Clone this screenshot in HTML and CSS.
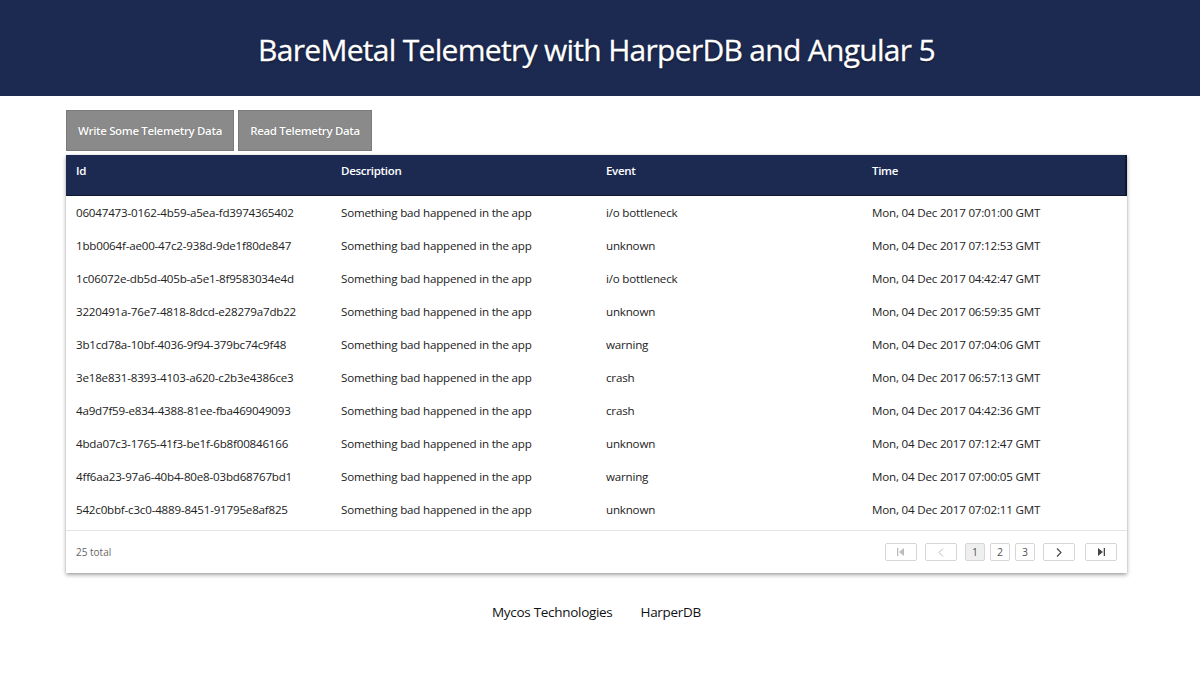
FILE: index.html
```html
<!DOCTYPE html>
<html>
<head>
<meta charset="utf-8">
<link rel="stylesheet" href="styles.css">
</head>
<body>
<header class="banner"><h1>BareMetal Telemetry with HarperDB and Angular 5</h1></header>
<main class="content">
  <div class="actions">
    <button class="btn">Write Some Telemetry Data</button>
    <button class="btn">Read Telemetry Data</button>
  </div>
  <section class="card">
    <div class="thead">
      <div>Id</div><div>Description</div><div>Event</div><div>Time</div>
    </div>
    <div class="tbody">
      <div class="row"><div>06047473-0162-4b59-a5ea-fd3974365402</div><div>Something bad happened in the app</div><div>i/o bottleneck</div><div>Mon, 04 Dec 2017 07:01:00 GMT</div></div>
      <div class="row"><div>1bb0064f-ae00-47c2-938d-9de1f80de847</div><div>Something bad happened in the app</div><div>unknown</div><div>Mon, 04 Dec 2017 07:12:53 GMT</div></div>
      <div class="row"><div>1c06072e-db5d-405b-a5e1-8f9583034e4d</div><div>Something bad happened in the app</div><div>i/o bottleneck</div><div>Mon, 04 Dec 2017 04:42:47 GMT</div></div>
      <div class="row"><div>3220491a-76e7-4818-8dcd-e28279a7db22</div><div>Something bad happened in the app</div><div>unknown</div><div>Mon, 04 Dec 2017 06:59:35 GMT</div></div>
      <div class="row"><div>3b1cd78a-10bf-4036-9f94-379bc74c9f48</div><div>Something bad happened in the app</div><div>warning</div><div>Mon, 04 Dec 2017 07:04:06 GMT</div></div>
      <div class="row"><div>3e18e831-8393-4103-a620-c2b3e4386ce3</div><div>Something bad happened in the app</div><div>crash</div><div>Mon, 04 Dec 2017 06:57:13 GMT</div></div>
      <div class="row"><div>4a9d7f59-e834-4388-81ee-fba469049093</div><div>Something bad happened in the app</div><div>crash</div><div>Mon, 04 Dec 2017 04:42:36 GMT</div></div>
      <div class="row"><div>4bda07c3-1765-41f3-be1f-6b8f00846166</div><div>Something bad happened in the app</div><div>unknown</div><div>Mon, 04 Dec 2017 07:12:47 GMT</div></div>
      <div class="row"><div>4ff6aa23-97a6-40b4-80e8-03bd68767bd1</div><div>Something bad happened in the app</div><div>warning</div><div>Mon, 04 Dec 2017 07:00:05 GMT</div></div>
      <div class="row"><div>542c0bbf-c3c0-4889-8451-91795e8af825</div><div>Something bad happened in the app</div><div>unknown</div><div>Mon, 04 Dec 2017 07:02:11 GMT</div></div>
    </div>
    <div class="tfoot">
      <span class="total">25 total</span>
      <nav class="pager">
        <span class="pg wide"><svg width="10" height="8" viewBox="0 0 10 8"><rect x="1" y="0" width="1.3" height="8" fill="#bbb"/><path d="M8 0 L3 4 L8 8 Z" fill="#bbb"/></svg></span>
        <span class="pg wide"><svg width="6" height="9" viewBox="0 0 6 9"><path d="M5 0.5 L1 4.5 L5 8.5" fill="none" stroke="#bbb" stroke-width="1"/></svg></span>
        <span class="pg num active">1</span>
        <span class="pg num">2</span>
        <span class="pg num">3</span>
        <span class="pg wide"><svg width="6" height="9" viewBox="0 0 6 9"><path d="M1 0.5 L5 4.5 L1 8.5" fill="none" stroke="#444" stroke-width="1.1"/></svg></span>
        <span class="pg wide"><svg width="10" height="8" viewBox="0 0 10 8"><path d="M2 0 L7 4 L2 8 Z" fill="#444"/><rect x="7.7" y="0" width="1.3" height="8" fill="#444"/></svg></span>
      </nav>
    </div>
  </section>
</main>
<footer class="links">
  <a href="#">Mycos Technologies</a>
  <a href="#">HarperDB</a>
</footer>
</body>
</html>
```

FILE: styles.css
```css
* { box-sizing: border-box; }
body {
  margin: 0;
  font-family: "Open Sans", "Noto Sans", sans-serif;
  color: #222;
  background: #fff;
}
.banner {
  background: #1c2a52;
  height: 96px;
  display: flex;
  align-items: center;
  justify-content: center;
}
.banner h1 {
  margin: 0;
  color: #fff;
  font-weight: 400;
  font-size: 30px;
  letter-spacing: -0.7px;
  -webkit-text-stroke: 0.3px #fff;
  text-shadow: 0 1px 2px rgba(0,0,0,0.6);
  padding-top: 3px;
  padding-right: 7px;
}
.content {
  padding: 14px 73px 0 66px;
}
.actions {
  display: flex;
  gap: 4px;
  margin-bottom: 4px;
}
.btn {
  height: 41px;
  background: #8a8a8a;
  border: 1px solid #7a7a7a;
  color: #fff;
  font-family: "Open Sans", sans-serif;
  font-size: 11.5px;
  font-weight: 600;
  letter-spacing: -0.35px;
  padding: 0 11px;
  text-shadow: 0 0 1px rgba(0,0,0,0.3);
}
.btn:first-child { width: 168px; }
.btn:last-child { width: 134px; }
.card {
  background: #fff;
  box-shadow: 0 2px 4px rgba(0,0,0,0.35), 0 0 2px rgba(0,0,0,0.1);
}
.thead, .row {
  display: grid;
  grid-template-columns: 265px 265px 266px 1fr;
  padding: 0 0 0 10px;
}
.thead {
  background: #1c2a52;
  color: #fff;
  height: 41px;
  align-items: start;
  padding-top: 8px;
  font-size: 11.5px;
  font-weight: 600;
  letter-spacing: -0.3px;
  border-right: 2px solid #0e1630;
  border-bottom: 1px solid #0e1630;
}
.thead > div, .row > div { padding-right: 10px; }
.tbody { padding-bottom: 4px; border-bottom: 1px solid #e4e4e4; }
.row {
  height: 33px;
  align-items: center;
  font-size: 11.6px;
  letter-spacing: -0.2px;
  color: #222;
}
.tfoot {
  height: 42px;
  display: flex;
  align-items: center;
  justify-content: space-between;
  padding: 0 10px;
}
.total {
  font-size: 10px;
  color: #666;
}
.pager {
  display: flex;
  align-items: center;
}
.pg {
  height: 18px;
  border: 1px solid #d6d6d6;
  border-radius: 2px;
  display: flex;
  align-items: center;
  justify-content: center;
  font-size: 10.5px;
  color: #555;
  margin-left: 5px;
}
.pg.wide { width: 32px; margin-left: 8px; }
.pg.wide:first-child { margin-left: 0; }
.pg.num { width: 20px; }
.pg.active { background: #efefef; }
.pager .pg.num:nth-child(3) { margin-left: 8px; }
.pager .pg.wide:nth-child(6) { margin-left: 8px; }
.pager .pg.wide:nth-child(7) { margin-left: 10px; }
.links {
  display: flex;
  justify-content: center;
  gap: 28px;
  padding-top: 30px;
  padding-right: 7px;
}
.links a {
  color: #111;
  text-decoration: none;
  font-size: 13.5px;
  letter-spacing: -0.3px;
}
```
